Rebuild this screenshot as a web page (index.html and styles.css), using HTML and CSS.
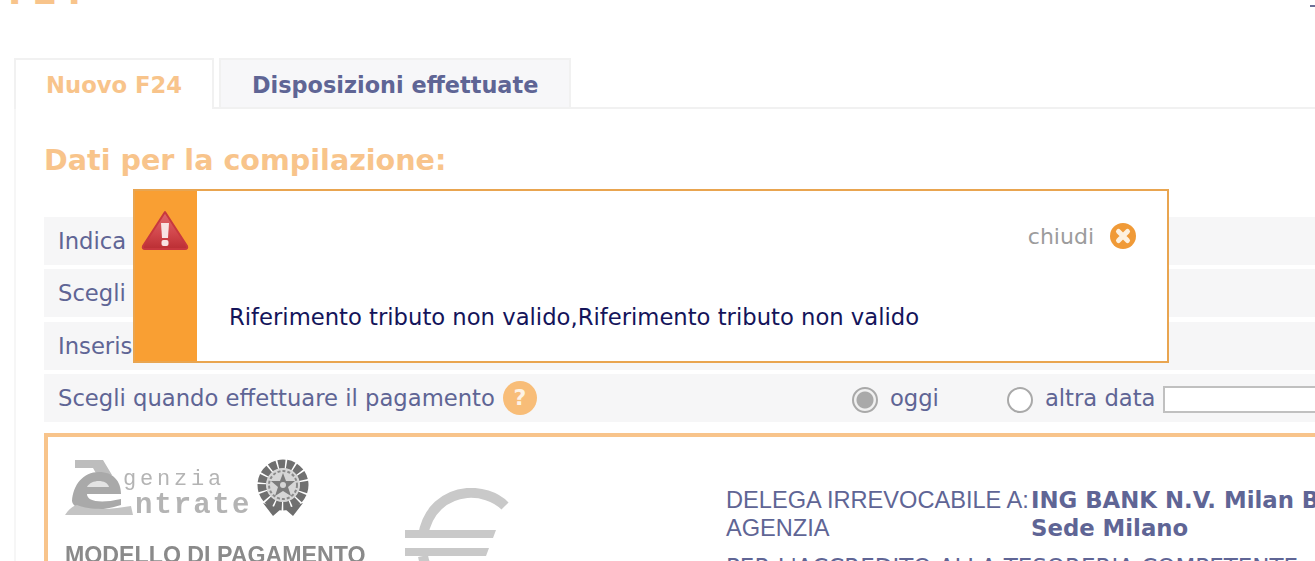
FILE: index.html
```html
<!DOCTYPE html>
<html lang="it">
<head>
    <meta charset="UTF-8">
    <meta name="viewport" content="width=device-width, initial-scale=1.0">
    <title>F24</title>
    <link rel="stylesheet" href="styles.css">
</head>
<body>
    <div class="corner-mark"></div>
    <h1 class="page-title">F24</h1>

    <nav class="tabs">
        <a class="tab tab-active">Nuovo F24</a>
        <a class="tab">Disposizioni effettuate</a>
    </nav>

    <main class="panel">
        <h2 class="panel-title">Dati per la compilazione:</h2>

        <div class="row">Indica il tipo di modello</div>
        <div class="row">Scegli il conto</div>
        <div class="row">Inserisci i dati</div>
        <div class="row row-when">
            <span>Scegli quando effettuare il pagamento</span>
            <span class="help">?</span>
            <label class="choice choice-today"><span class="radio radio-on"></span>oggi</label>
            <label class="choice choice-other"><span class="radio"></span>altra data</label>
            <input type="text" class="date-input">
        </div>

        <section class="form-box">
            <div class="form-left">
                <div class="logo">
                    <svg class="logo-mark" width="70" height="58" viewBox="0 0 70 58">
                        <path d="M10 1H38L47 16H32L28 9H10Z" fill="#bdbdbd"/>
                        <path d="M7 42C8 26 18 13 34 13C48 13 56 22 56 35H22C22 42 34 45 56 40V46C30 54 8 52 7 42Z" fill="#a9a9a9"/>
                        <path d="M22 28C26 20 42 20 44 28Z" fill="#e4e4e4"/>
                        <path d="M0 56C4 50 8 47 12 46C26 52 50 50 66 47L68 56Z" fill="#c4c4c4"/>
                    </svg>
                    <div class="logo-words">
                        <span class="logo-top">genzia</span>
                        <span class="logo-bottom">ntrate</span>
                    </div>
                    <svg class="emblem" width="52" height="58" viewBox="0 0 52 58">
                        <circle cx="26" cy="26" r="21" fill="none" stroke="#707070" stroke-width="9" stroke-dasharray="7 1.500"/>
                        <circle cx="26" cy="26" r="17" fill="#d6d6d6"/>
                        <circle cx="26" cy="26" r="14" fill="none" stroke="#8a8a8a" stroke-width="2" stroke-dasharray="3 2"/>
                        <path d="M26 14L29 22L38 22L31 28L34 37L26 32L18 37L21 28L14 22L23 22Z" fill="#7c7c7c"/>
                        <circle cx="26" cy="26" r="3" fill="#d6d6d6"/>
                        <path d="M6 44L24 50L16 57ZM46 44L28 50L36 57Z" fill="#6e6e6e"/>
                    </svg>
                </div>
                <div class="model-title">MODELLO DI PAGAMENTO</div>
            </div>
            <svg class="euro" width="106" height="110" viewBox="0 0 106 110">
                <path d="M100 18C90 8 75 4 62 5C40 7 22 22 18 48" fill="none" stroke="#c9c9c9" stroke-width="10"/>
                <path d="M0 42H91L88 50H0ZM0 60H84L81 68H0Z" fill="#c9c9c9"/>
                <path d="M18 68C22 90 40 104 62 105C75 106 88 102 98 94" fill="none" stroke="#c9c9c9" stroke-width="10"/>
            </svg>
            <div class="delega">
                <div class="delega-grid">
                    <span>DELEGA IRREVOCABILE A:</span>
                    <strong>ING BANK N.V. Milan Branch</strong>
                    <span>AGENZIA</span>
                    <strong>Sede Milano</strong>
                </div>
                <p class="delega-note">PER L'ACCREDITO ALLA TESORERIA COMPETENTE</p>
            </div>
        </section>
    </main>

    <!-- Messaggio di errore -->
    <div class="alert">
        <div class="alert-side">
            <svg width="52" height="44" viewBox="0 0 52 44">
                <defs>
                    <linearGradient id="warn" x1="0" y1="0" x2="0" y2="1">
                        <stop offset="0" stop-color="#e0666b"/>
                        <stop offset="0.6" stop-color="#d0454a"/>
                        <stop offset="1" stop-color="#bb2e34"/>
                    </linearGradient>
                </defs>
                <path d="M25 3L47 37Q48 40 45 40H5Q2 40 3 37Z" fill="url(#warn)" stroke="#c8383e" stroke-width="2" stroke-linejoin="round"/>
                <path d="M21 14H29L28 29H22Z" fill="#f8e2e2"/>
                <rect x="21.5" y="31" width="7" height="6" rx="2" fill="#f8e2e2"/>
            </svg>
        </div>
        <div class="alert-body">
            <div class="alert-close">
                <span>chiudi</span>
                <svg width="28" height="28" viewBox="0 0 28 28">
                    <circle cx="14" cy="14" r="13" fill="#f09a37"/>
                    <path d="M9.5 9.5L18.500 18.500M18.500 9.500L9.500 18.500" stroke="#fdf1e0" stroke-width="5" stroke-linecap="round"/>
                </svg>
            </div>
            <p class="alert-text">Riferimento tributo non valido,Riferimento tributo non valido</p>
        </div>
    </div>
</body>
</html>
```

FILE: styles.css
```css
/* Stili generali */
html, body {
    height: 561px;
    overflow: hidden;
}

body {
    margin: 0;
    font-family: 'DejaVu Sans', Verdana, sans-serif;
    color: #5f6595;
    background-color: #fff;
    position: relative;
}

.corner-mark {
    position: absolute;
    top: 5px;
    right: 0;
    width: 5px;
    height: 2px;
    background-color: #6b6f96;
}

.page-title {
    margin: -26px 0 0 8px;
    height: 84px;
    font-size: 36px;
    line-height: 36px;
    color: #f8c48b;
}

/* Tabs */
.tabs {
    display: flex;
    gap: 5px;
    margin-left: 14px;
    height: 49px;
}

.tab {
    box-sizing: border-box;
    height: 49px;
    padding: 0 31px;
    font-size: 22.4px;
    font-weight: bold;
    line-height: 50px;
    white-space: nowrap;
    background-color: #f7f7f9;
    border: 2px solid #f1f1f1;
    border-bottom: none;
    color: #5f6595;
}

.tab-active {
    width: 200px;
    height: 51px;
    padding-left: 30px;
    font-size: 22.7px;
    background-color: #fff;
    color: #f8c48b;
    position: relative;
    z-index: 1;
}

.panel {
    margin-left: 14px;
    padding: 0 0 0 28px;
    border-top: 2px solid #f1f1f1;
    border-left: 2px solid #f6f6f6;
    width: 1400px;
}

.panel-title {
    margin: 33px 0 0;
    height: 75px;
    font-size: 28.6px;
    line-height: 36px;
    color: #f8c48b;
}

/* Righe */
.row {
    box-sizing: border-box;
    height: 48px;
    margin-bottom: 4.4px;
    padding-left: 14px;
    font-size: 22.7px;
    line-height: 49px;
    white-space: nowrap;
    background-color: #f6f6f7;
}

.row-when {
    display: flex;
    align-items: center;
    margin-bottom: 11px;
}

.help {
    flex-shrink: 0;
    width: 34px;
    height: 34px;
    margin-left: 8px;
    border-radius: 50%;
    background-color: #f8bd78;
    color: #fdf3e6;
    font-size: 22px;
    font-weight: bold;
    line-height: 34px;
    text-align: center;
}

.choice {
    display: flex;
    align-items: center;
    gap: 12px;
}

.choice-today {
    margin-left: 315px;
}

.choice-other {
    margin-left: 68px;
}

.radio {
    box-sizing: border-box;
    width: 26px;
    height: 26px;
    margin-top: 4px;
    border: 2px solid #a9a9a9;
    border-radius: 50%;
    background-color: #fff;
}

.radio-on {
    background: radial-gradient(circle, #a9a9a9 0 8px, #f0f0f0 9px);
}

.date-input {
    box-sizing: border-box;
    flex-shrink: 0;
    width: 300px;
    height: 27px;
    margin: 3px 0 0 7px;
    border: 2px solid #c0c0c0;
    background-color: #fff;
}

/* Riquadro del modello */
.form-box {
    display: flex;
    box-sizing: border-box;
    height: 300px;
    padding: 22px 0 0 17px;
    border: 4px solid #f8c48b;
}

.form-left {
    width: 340px;
    flex-shrink: 0;
    filter: blur(0.6px);
}

.logo {
    display: flex;
    height: 62px;
    position: relative;
}

.logo-words {
    position: absolute;
    left: 58px;
    top: 8px;
    display: flex;
    flex-direction: column;
    font-family: 'Liberation Mono', monospace;
    color: #b4b4b4;
    line-height: 26px;
}

.logo-top {
    font-size: 22px;
    letter-spacing: 3.8px;
}

.logo-bottom {
    margin-left: 12px;
    font-size: 29px;
    font-weight: bold;
    letter-spacing: 2px;
}

.logo-mark, .emblem {
    flex-shrink: 0;
}

.emblem {
    margin-left: 122px;
}

.model-title {
    margin-top: 21px;
    font-family: 'Liberation Sans', sans-serif;
    font-size: 23.2px;
    font-weight: bold;
    color: #8a8a8a;
    white-space: nowrap;
}

.euro {
    margin-top: 29px;
    flex-shrink: 0;
    filter: blur(0.6px);
}

.delega {
    margin-left: 215px;
    margin-top: 27px;
    font-size: 23px;
    line-height: 28px;
}

.delega-grid {
    display: grid;
    grid-template-columns: 305px auto;
    white-space: nowrap;
    font-family: 'Liberation Sans', sans-serif;
    font-size: 23.6px;
}

.delega-grid strong {
    font-family: 'DejaVu Sans', sans-serif;
    font-size: 22.8px;
}

.delega-note {
    margin: 11px 0 0;
    white-space: nowrap;
}

/* Messaggio di errore */
.alert {
    position: absolute;
    left: 133px;
    top: 189px;
    box-sizing: border-box;
    display: flex;
    width: 1036px;
    height: 174px;
    border: 2px solid #e9a550;
    background-color: #fff;
}

.alert-side {
    width: 62px;
    padding: 18px 0 0 5px;
    box-sizing: border-box;
    background-color: #f99f33;
}

.alert-body {
    flex: 1;
    padding-left: 32px;
}

.alert-close {
    display: flex;
    justify-content: flex-end;
    align-items: center;
    gap: 15px;
    margin: 31px 30px 0 0;
    height: 28px;
    font-size: 22px;
    color: #9c9c9c;
}

.alert-text {
    margin: 53px 0 0;
    font-size: 22.7px;
    line-height: 28px;
    color: #14145a;
    white-space: nowrap;
}
```
